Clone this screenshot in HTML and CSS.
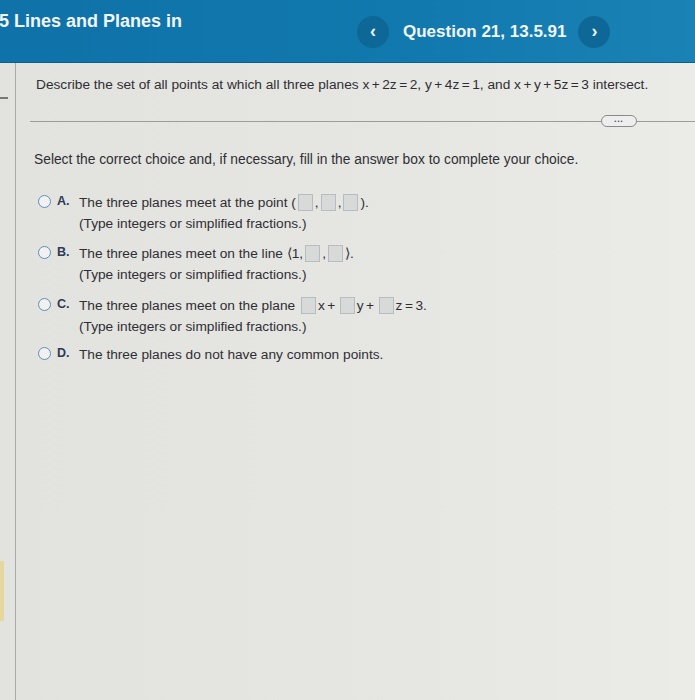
FILE: index.html
```html
<!DOCTYPE html>
<html>
<head>
<meta charset="utf-8">
<link rel="stylesheet" href="styles.css">
</head>
<body>
<div class="header">
  <div class="title">5 Lines and Planes in</div>
  <div class="nav">
    <span class="navbtn">&#8249;</span>
    <span class="qtitle">Question 21, 13.5.91</span>
    <span class="navbtn">&#8250;</span>
  </div>
</div>
<div class="main">
  <div class="side"><span class="dash"></span><span class="yellow"></span></div>
  <div class="content">
    <p class="question">Describe the set of all points at which all three planes x<span class="op">+</span>2z<span class="op">=</span>2, y<span class="op">+</span>4z<span class="op">=</span>1, and x<span class="op">+</span>y<span class="op">+</span>5z<span class="op">=</span>3 intersect.</p>
    <div class="rule"><span class="line"></span><span class="more">&#8226;&#8226;&#8226;</span><span class="line short"></span></div>
    <p class="instr">Select the correct choice and, if necessary, fill in the answer box to complete your choice.</p>
    <div class="choices">
      <div class="choice">
        <span class="radio"></span><span class="letter">A.</span>
        <div class="ctext">
          <div>The three planes meet at the point (<span class="box"></span>,<span class="box"></span>,<span class="box"></span>).</div>
          <div>(Type integers or simplified fractions.)</div>
        </div>
      </div>
      <div class="choice">
        <span class="radio"></span><span class="letter">B.</span>
        <div class="ctext">
          <div>The three planes meet on the line &#10216;1,<span class="box"></span>,<span class="box"></span>&#10217;.</div>
          <div>(Type integers or simplified fractions.)</div>
        </div>
      </div>
      <div class="choice">
        <span class="radio"></span><span class="letter">C.</span>
        <div class="ctext">
          <div>The three planes meet on the plane <span class="box"></span>x<span class="op">+</span><span class="box"></span>y<span class="op">+</span><span class="box"></span>z<span class="op">=</span>3.</div>
          <div>(Type integers or simplified fractions.)</div>
        </div>
      </div>
      <div class="choice">
        <span class="radio"></span><span class="letter">D.</span>
        <div class="ctext">
          <div>The three planes do not have any common points.</div>
        </div>
      </div>
    </div>
  </div>
</div>
</body>
</html>
```
FILE: styles.css
```css
html, body { margin: 0; padding: 0; }
body {
  width: 695px; height: 700px; overflow: hidden;
  font-family: "Liberation Sans", Arial, sans-serif;
  background: linear-gradient(90deg, #e2e2df 0%, #e6e6e3 60%, #ebebe8 100%);
  color: #2f2f33;
}
.header {
  height: 62px;
  background: linear-gradient(90deg, #0f72a8 0%, #1179ad 60%, #1a82b5 100%);
  display: flex; align-items: flex-start;
  color: #f2f6f8;
  border-bottom: 1px solid #0b5f8c;
}
.title {
  font-weight: bold; font-size: 18px;
  margin-left: -1px; padding-top: 11px;
  width: 358px;
}
.nav { display: flex; align-items: center; padding-top: 16px; }
.navbtn {
  width: 32px; height: 32px; border-radius: 50%;
  background: #0d6898;
  display: flex; align-items: center; justify-content: center;
  font-size: 18px; font-weight: bold; line-height: 1;
  padding-bottom: 3px; box-sizing: border-box;
}
.qtitle { font-weight: bold; font-size: 17px; margin: 0 12px 0 14px; }
.main { display: flex; height: 638px; }
.side {
  width: 15px; border-right: 1px solid #a9a9a8; position: relative;
  flex: none;
}
.dash { position: absolute; left: 0; top: 34px; width: 8px; height: 2px; background: #777; }
.yellow { position: absolute; left: 0; top: 498px; width: 4px; height: 60px; background: #e6d79c; }
.content { flex: 1; padding-left: 20px; }
.question { margin: 14px 0 0 0; font-size: 13.7px; line-height: 16px; }
.op { margin: 0 2.5px; }
.rule { display: flex; align-items: center; margin-top: 22px; margin-left: -6px; }
.line { flex: 1; height: 1px; background: #9c9c9c; }
.line.short { flex: none; width: 58px; }
.more {
  width: 34px; height: 10px; border: 1.5px solid #8a8a8a; border-radius: 6px;
  font-size: 6px; line-height: 10px; text-align: center; color: #555;
  letter-spacing: 1px; background: #eee;
}
.instr { margin: 25px 0 0 -2px; font-size: 13.8px; line-height: 16px; }
.choices { margin-top: 24px; display: flex; flex-direction: column; gap: 9px; margin-left: 2px; }
.choice { display: flex; align-items: flex-start; font-size: 13.7px; line-height: 21px; }
.radio {
  width: 13px; height: 13px; border: 1.5px solid #5d8dbb; border-radius: 50%;
  box-sizing: border-box; margin-top: 3px; flex: none; background: #f1f1ef;
}
.letter { font-weight: bold; font-size: 12.5px; color: #2e3a55; width: 22px; margin-left: 6px; line-height: 19px; flex: none; }
.ctext { line-height: 21px; }
.choice:nth-child(3) { margin-top: 1px; }
.choice:nth-child(4) { margin-top: -2px; }
.box {
  display: inline-block; width: 15px; height: 17px; vertical-align: -4px;
  border: 1px solid #b6bcc2; background: #d8d9d9; margin: 0 2px;
  box-sizing: border-box;
}
```
